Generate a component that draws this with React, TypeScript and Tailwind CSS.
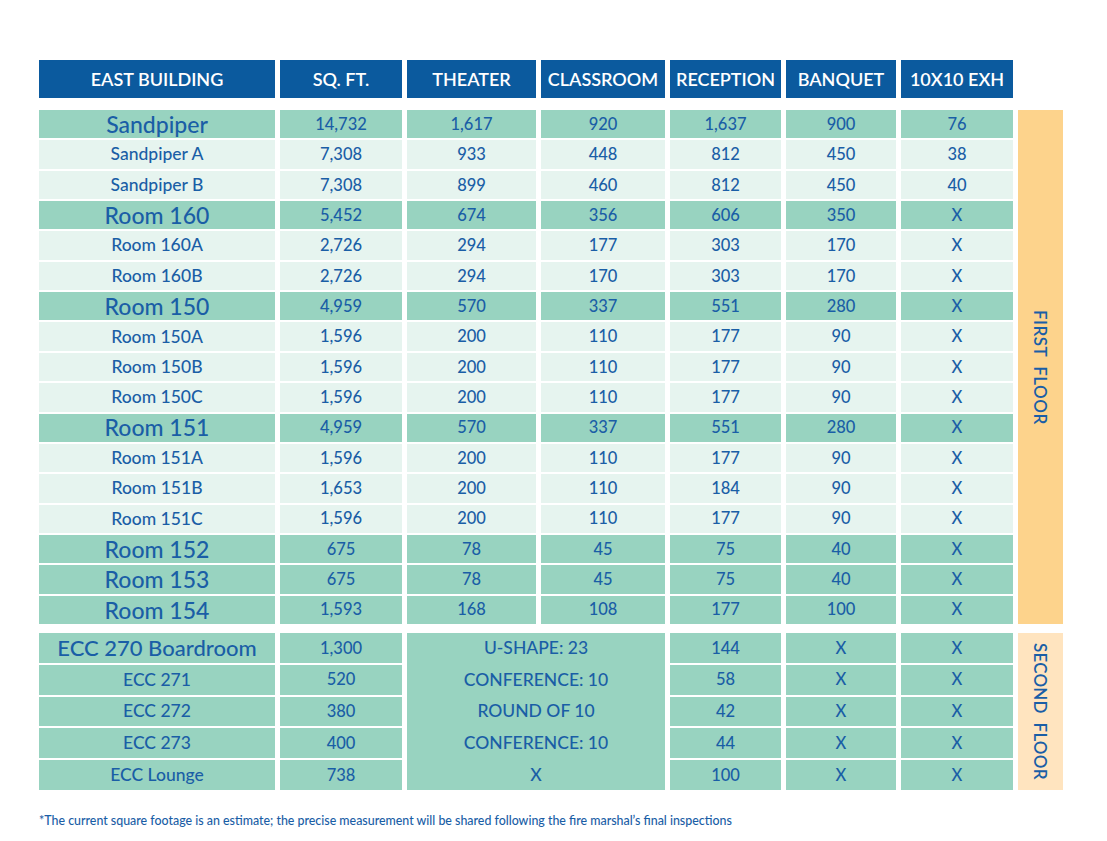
import React from 'react';

type Row = { name: string; big?: boolean; v: string[] };

const firstFloor: Row[] = [
    { name: 'Sandpiper', big: true, v: ['14,732', '1,617', '920', '1,637', '900', '76'] },
    { name: 'Sandpiper A', v: ['7,308', '933', '448', '812', '450', '38'] },
    { name: 'Sandpiper B', v: ['7,308', '899', '460', '812', '450', '40'] },
    { name: 'Room 160', big: true, v: ['5,452', '674', '356', '606', '350', 'X'] },
    { name: 'Room 160A', v: ['2,726', '294', '177', '303', '170', 'X'] },
    { name: 'Room 160B', v: ['2,726', '294', '170', '303', '170', 'X'] },
    { name: 'Room 150', big: true, v: ['4,959', '570', '337', '551', '280', 'X'] },
    { name: 'Room 150A', v: ['1,596', '200', '110', '177', '90', 'X'] },
    { name: 'Room 150B', v: ['1,596', '200', '110', '177', '90', 'X'] },
    { name: 'Room 150C', v: ['1,596', '200', '110', '177', '90', 'X'] },
    { name: 'Room 151', big: true, v: ['4,959', '570', '337', '551', '280', 'X'] },
    { name: 'Room 151A', v: ['1,596', '200', '110', '177', '90', 'X'] },
    { name: 'Room 151B', v: ['1,653', '200', '110', '184', '90', 'X'] },
    { name: 'Room 151C', v: ['1,596', '200', '110', '177', '90', 'X'] },
    { name: 'Room 152', big: true, v: ['675', '78', '45', '75', '40', 'X'] },
    { name: 'Room 153', big: true, v: ['675', '78', '45', '75', '40', 'X'] },
    { name: 'Room 154', big: true, v: ['1,593', '168', '108', '177', '100', 'X'] },
];

// second floor: theater + classroom share one merged cell
const secondFloor = [
    { name: 'ECC 270 Boardroom', big: true, sq: '1,300', layout: 'U-SHAPE: 23', rest: ['144', 'X', 'X'] },
    { name: 'ECC 271', sq: '520', layout: 'CONFERENCE: 10', rest: ['58', 'X', 'X'] },
    { name: 'ECC 272', sq: '380', layout: 'ROUND OF 10', rest: ['42', 'X', 'X'] },
    { name: 'ECC 273', sq: '400', layout: 'CONFERENCE: 10', rest: ['44', 'X', 'X'] },
    { name: 'ECC Lounge', sq: '738', layout: 'X', rest: ['100', 'X', 'X'] },
];

const headers = ['EAST BUILDING', 'SQ. FT.', 'THEATER', 'CLASSROOM', 'RECEPTION', 'BANQUET', '10X10 EXH'];

const cols = 'grid grid-cols-[236px_122px_129px_124px_111px_110px_112px_45px] gap-x-[5px]';

const Cell = ({ dark, children, className = '' }: { dark?: boolean; children: React.ReactNode; className?: string }) => (
    <div className={`flex items-center justify-center ${dark ? 'bg-[#98d3c0]' : 'bg-[#e6f4ef]'} ${className}`}>
        {children}
    </div>
);

export default function App() {
    return (
        <div className="min-h-[841px] w-[1107px] bg-white pt-[60px] pl-[39px] font-[Lato,'Liberation_Sans',sans-serif] font-medium text-[#1a5ea6]">
            {/* Header */}
            <div className={`${cols} h-[38px]`}>
                {headers.map((h) => (
                    <div key={h} className="flex items-center justify-center bg-[#0b5a9e] pt-[1px] text-[18px] font-semibold text-white">
                        {h}
                    </div>
                ))}
                <div />
            </div>

            {/* First floor */}
            <div className={`${cols} mt-[12px] h-[514px] grid-rows-[repeat(17,minmax(0,1fr))] gap-y-[2px]`}>
                {firstFloor.map((r, i) => (
                    <React.Fragment key={r.name}>
                        <Cell dark={r.big} className={r.big ? 'text-[23px]' : 'text-[17.5px]'}>
                            {r.name}
                        </Cell>
                        {r.v.map((v, j) => (
                            <Cell key={j} dark={r.big} className="text-[16.5px]">
                                {v}
                            </Cell>
                        ))}
                        {i === 0 && (
                            <div className="row-span-17 col-start-8 row-start-1 flex items-center justify-center bg-[#fdd38c]">
                                <span className="[writing-mode:vertical-rl] text-[17px] font-semibold tracking-[0.5px] whitespace-pre">
                                    {'FIRST  FLOOR'}
                                </span>
                            </div>
                        )}
                    </React.Fragment>
                ))}
            </div>

            {/* Second floor */}
            <div className={`${cols} mt-[9px] h-[157px] grid-rows-[repeat(5,minmax(0,1fr))] gap-y-[2px]`}>
                {secondFloor.map((r, i) => (
                    <React.Fragment key={r.name}>
                        <Cell dark className={`col-start-1 ${r.big ? 'text-[22px]' : 'text-[17.5px]'}`}>
                            {r.name}
                        </Cell>
                        <Cell dark className="col-start-2 text-[16.5px]">
                            {r.sq}
                        </Cell>
                        {i === 0 && (
                            <div className="col-start-3 col-span-2 row-start-1 row-span-5 grid grid-rows-[repeat(5,minmax(0,1fr))] gap-y-[2px] bg-[#98d3c0]">
                                {secondFloor.map((s) => (
                                    <div key={s.name} className="flex items-center justify-center text-[17.5px]">
                                        {s.layout}
                                    </div>
                                ))}
                            </div>
                        )}
                        {r.rest.map((v, j) => (
                            <Cell key={j} dark className="text-[16.5px]">
                                {v}
                            </Cell>
                        ))}
                        {i === 0 && (
                            <div className="col-start-8 row-start-1 row-span-5 flex items-center justify-center bg-[#ffe4bf]">
                                <span className="[writing-mode:vertical-rl] text-[17px] font-semibold tracking-[0.2px] whitespace-pre">
                                    {'SECOND  FLOOR'}
                                </span>
                            </div>
                        )}
                    </React.Fragment>
                ))}
            </div>

            <p className="mt-[22px] text-[12.4px] text-[#1a5ea6]">
                *The current square footage is an estimate; the precise measurement will be shared following the fire marshal’s final inspections
            </p>
        </div>
    );
}
